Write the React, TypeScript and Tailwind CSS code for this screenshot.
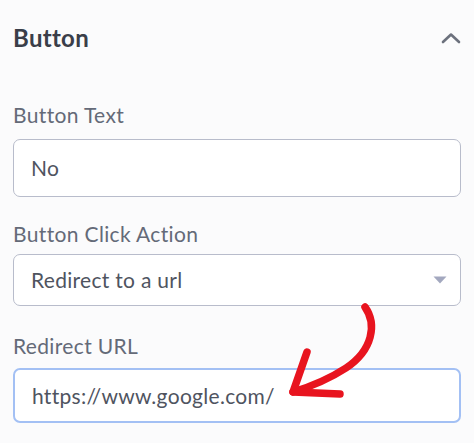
import React from 'react';

const font = { fontFamily: 'Lato, "Open Sans", sans-serif' };

function Label({ children, className }: { children: React.ReactNode; className: string }) {
  return <p className={`text-[21px] leading-[24px] tracking-[0.35px] text-[#646a78] ${className}`}>{children}</p>;
}

export default function App() {
  return (
    <div className="relative h-[443px] w-[474px] overflow-hidden bg-[#fbfbfc]" style={font}>
      <div className="flex flex-col px-[13px] pt-[24px]">
        <div className="flex items-center justify-between">
          <h2 className="text-[24px] font-bold leading-[28px] tracking-[0.3px] text-[#3a3e49]">Button</h2>
          <svg width="22" height="14" viewBox="0 0 22 14" className="mr-[-1px]">
            <path d="M3 11 L11 3.5 L19 11" fill="none" stroke="#6c717d" strokeWidth="2.6" strokeLinecap="round" strokeLinejoin="round" />
          </svg>
        </div>

        <Label className="mt-[51px]">Button Text</Label>
        <div className="mt-[12px] flex h-[58px] items-center rounded-[7px] border-[1.5px] border-[#b8bccb] bg-white px-[17px] text-[21px] tracking-[0.3px] text-[#4f545f]">
          No
        </div>

        <Label className="mt-[25px]">Button Click Action</Label>
        <div className="mt-[8px] flex h-[52px] items-center justify-between rounded-[7px] border-[1.5px] border-[#b8bccb] bg-white pl-[17px] pr-[13px] text-[21px] tracking-[0.3px] text-[#4f545f]">
          <span>Redirect to a url</span>
          <svg width="14" height="8" viewBox="0 0 14 8">
            <path d="M0.5 0.5 L13.5 0.5 L7 7.5 Z" fill="#a3a8bf" />
          </svg>
        </div>

        <Label className="mt-[28px]">Redirect URL</Label>
        <div className="mt-[10px] flex h-[55px] items-center rounded-[7px] border-2 border-[#a3c0f4] bg-white px-[17px] text-[21px] tracking-[0.3px] text-[#4f545f]">
          https://www.google.com/
        </div>
      </div>

      <svg className="pointer-events-none absolute inset-0" width="474" height="443" viewBox="0 0 474 443">
        <g fill="none" stroke="#e8141f" strokeWidth="7.5" strokeLinecap="round" strokeLinejoin="round">
          <path d="M365 307 C377 324 373 350 346 368 C326 381 306 388 293 392" />
          <path d="M307 352 L293 392 L340 394" />
        </g>
      </svg>
    </div>
  );
}
